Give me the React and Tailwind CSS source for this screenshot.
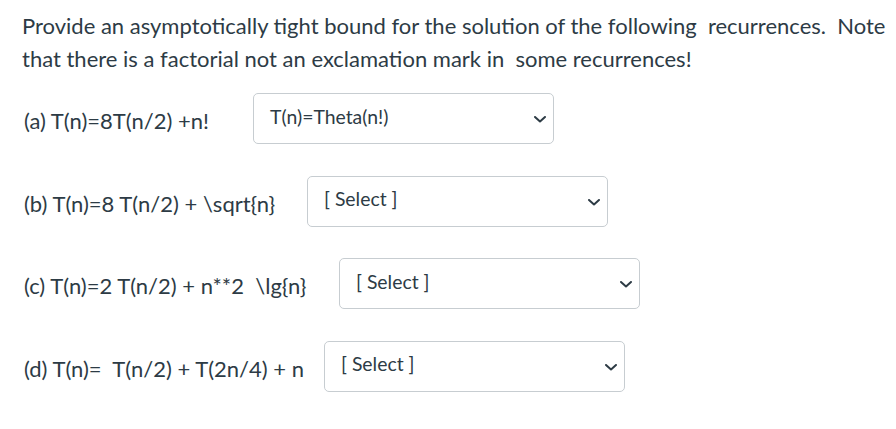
const rows = [
  { label: '(a) T(n)=8T(n/2) +n!', value: 'T(n)=Theta(n!)', w: 'w-[231px]' },
  { label: '(b) T(n)=8 T(n/2) + \\sqrt{n}', value: '[ Select ]', w: 'w-[285px]' },
  { label: '(c) T(n)=2 T(n/2) + n**2  \\lg{n}', value: '[ Select ]', w: 'w-[317px]' },
  { label: '(d) T(n)=  T(n/2) + T(2n/4) + n', value: '[ Select ]', w: 'w-[302px]' },
]

function Dropdown({ value }) {
  return (
    <div className="flex h-[51px] w-[301px] shrink-0 items-center justify-between rounded-[5px] border border-[#c7cdd1] bg-white pl-[16px] pr-[7px]">
      <span className="-mt-[4px] whitespace-pre text-[19.4px] text-[#2d3b45]">{value}</span>
      <svg width="12" height="7" viewBox="0 0 12 7" fill="none" className="mt-[2px]">
        <path d="M1 1l5 4.5L11 1" stroke="#2d3b45" strokeWidth="2" strokeLinecap="round" strokeLinejoin="round" />
      </svg>
    </div>
  )
}

export default function App() {
  return (
    <div className="min-h-[429px] w-[896px] bg-white pl-[22px] pt-[9px] text-[#2d3b45]" style={{ fontFamily: 'Lato, "Noto Sans", sans-serif' }}>
      <p className="whitespace-pre-wrap text-[22px] leading-[33px]">
        Provide an asymptotically tight bound for the solution of the following  recurrences.  Note that there is a factorial not an exclamation mark in  some recurrences!
      </p>

      <div className="mt-[18px] flex flex-col gap-[31.5px]">
        {rows.map((r) => (
          <div key={r.label} className="flex items-center">
            <span className={`mt-[4px] shrink-0 whitespace-pre pl-[2px] text-[22px] ${r.w}`}>{r.label}</span>
            <Dropdown value={r.value} />
          </div>
        ))}
      </div>
    </div>
  )
}
